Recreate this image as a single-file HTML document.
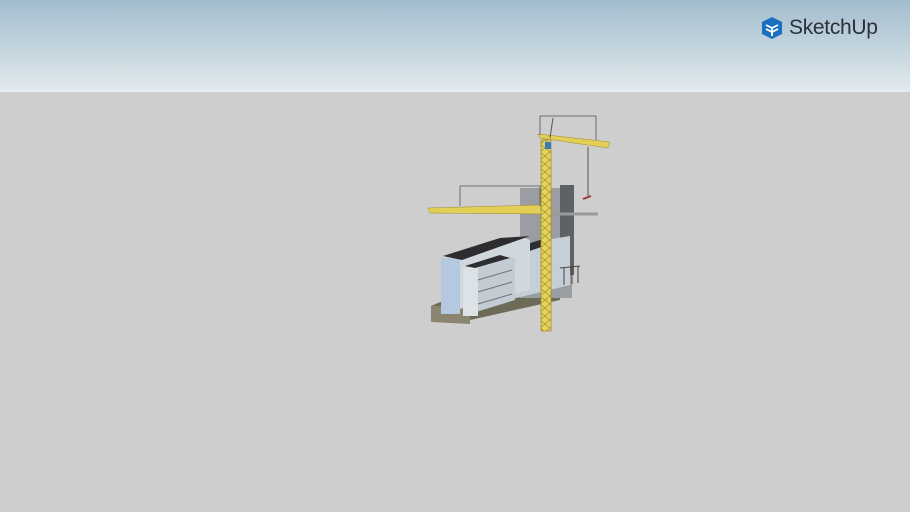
<!DOCTYPE html>
<html><head><meta charset="utf-8"><style>
html,body{margin:0;padding:0;width:910px;height:512px;overflow:hidden;font-family:"Liberation Sans",sans-serif}
.sky{position:absolute;left:0;top:0;width:910px;height:90px;background:linear-gradient(#a2bccd,#c4d5de 55%,#e0e9ec)}
.line{position:absolute;left:0;top:90px;width:910px;height:2px;background:#e8ecee}
.ground{position:absolute;left:0;top:92px;width:910px;height:420px;background:#cecece}
.logo{position:absolute;left:761px;top:16px;display:flex;align-items:center;color:#2b3138;font-size:21px;letter-spacing:-0.3px}
</style></head><body>
<div class="sky"></div><div class="line"></div><div class="ground"></div>
<div class="logo"><svg width="22" height="24" viewBox="0 0 22 24"><path d="M11 1 L21 6 V18 L11 23 L1 18 V6 Z" fill="#1a6fbf"/><path d="M5 9 L11 12 L17 9 M5 13 L11 16 L17 13 M11 12 V20" stroke="#fff" stroke-width="1.8" fill="none"/></svg><span style="margin-left:6px">SketchUp</span></div>
<svg style="position:absolute;left:0;top:0" width="910" height="512">
<defs><pattern id="lat" width="10" height="8" patternUnits="userSpaceOnUse"><rect width="10" height="8" fill="#e6d35a"/><path d="M0 0 L10 8 M0 8 L10 0" stroke="#a8962e" stroke-width="0.8"/></pattern></defs>
<polygon points="431,306 445,300 560,290 560,300 470,320 431,322" fill="#6e6a58"/>
<polygon points="431,306 470,306 470,324 431,322" fill="#8a8470"/>
<rect x="520" y="188" width="52" height="110" fill="#9a9ea2"/>
<rect x="560" y="185" width="14" height="90" fill="#5e6266"/>
<polygon points="508,252 545,240 570,236 570,285 508,300" fill="#c6ced6"/>
<polygon points="508,250 540,240 550,244 515,256" fill="#2e2e30"/>
<polygon points="441,258 520,236 530,240 530,290 441,314" fill="#d0d7dd"/>
<polygon points="441,258 460,258 460,314 441,314" fill="#b4c8e0"/>
<polygon points="443,256 500,238 530,236 462,260" fill="#2d2d2f"/>
<polygon points="463,268 508,256 515,258 515,300 463,316" fill="#c4ccd3"/>
<polygon points="463,268 478,266 478,316 463,316" fill="#dde2e7"/>
<polygon points="465,266 500,255 510,258 475,268" fill="#2d2d2f"/>
<g stroke="#6b7178" stroke-width="1">
<line x1="478" y1="280" x2="512" y2="270"/><line x1="478" y1="292" x2="512" y2="282"/><line x1="478" y1="304" x2="512" y2="294"/>
</g>
<g stroke="#444" stroke-width="1"><line x1="560" y1="268" x2="580" y2="266"/><line x1="564" y1="268" x2="564" y2="285"/><line x1="572" y1="267" x2="572" y2="284"/><line x1="578" y1="266" x2="578" y2="283"/></g>
<polygon points="428,208 540,205 545,214 430,213" fill="#e3cf55" stroke="#9a8a30" stroke-width="0.5"/>
<polyline points="460,206 460,186 540,186 540,206" fill="none" stroke="#555" stroke-width="0.8"/>
<line x1="548" y1="214" x2="598" y2="214" stroke="#999" stroke-width="3"/>
<rect x="541" y="140" width="10" height="191" fill="url(#lat)" stroke="#9a8830" stroke-width="0.7"/>
<polygon points="538,134 610,142 608,148 540,138" fill="#e3cf55" stroke="#9a8a30" stroke-width="0.5"/>
<polyline points="540,135 540,116 596,116 596,140" fill="none" stroke="#555" stroke-width="0.8"/>
<line x1="553" y1="118" x2="550" y2="138" stroke="#555"/>
<line x1="588" y1="147" x2="588" y2="196" stroke="#555"/>
<line x1="583" y1="199" x2="591" y2="196" stroke="#a03030" stroke-width="2"/>
<rect x="545" y="142" width="6" height="7" fill="#3a7ab8"/>
</svg>
</body></html>
